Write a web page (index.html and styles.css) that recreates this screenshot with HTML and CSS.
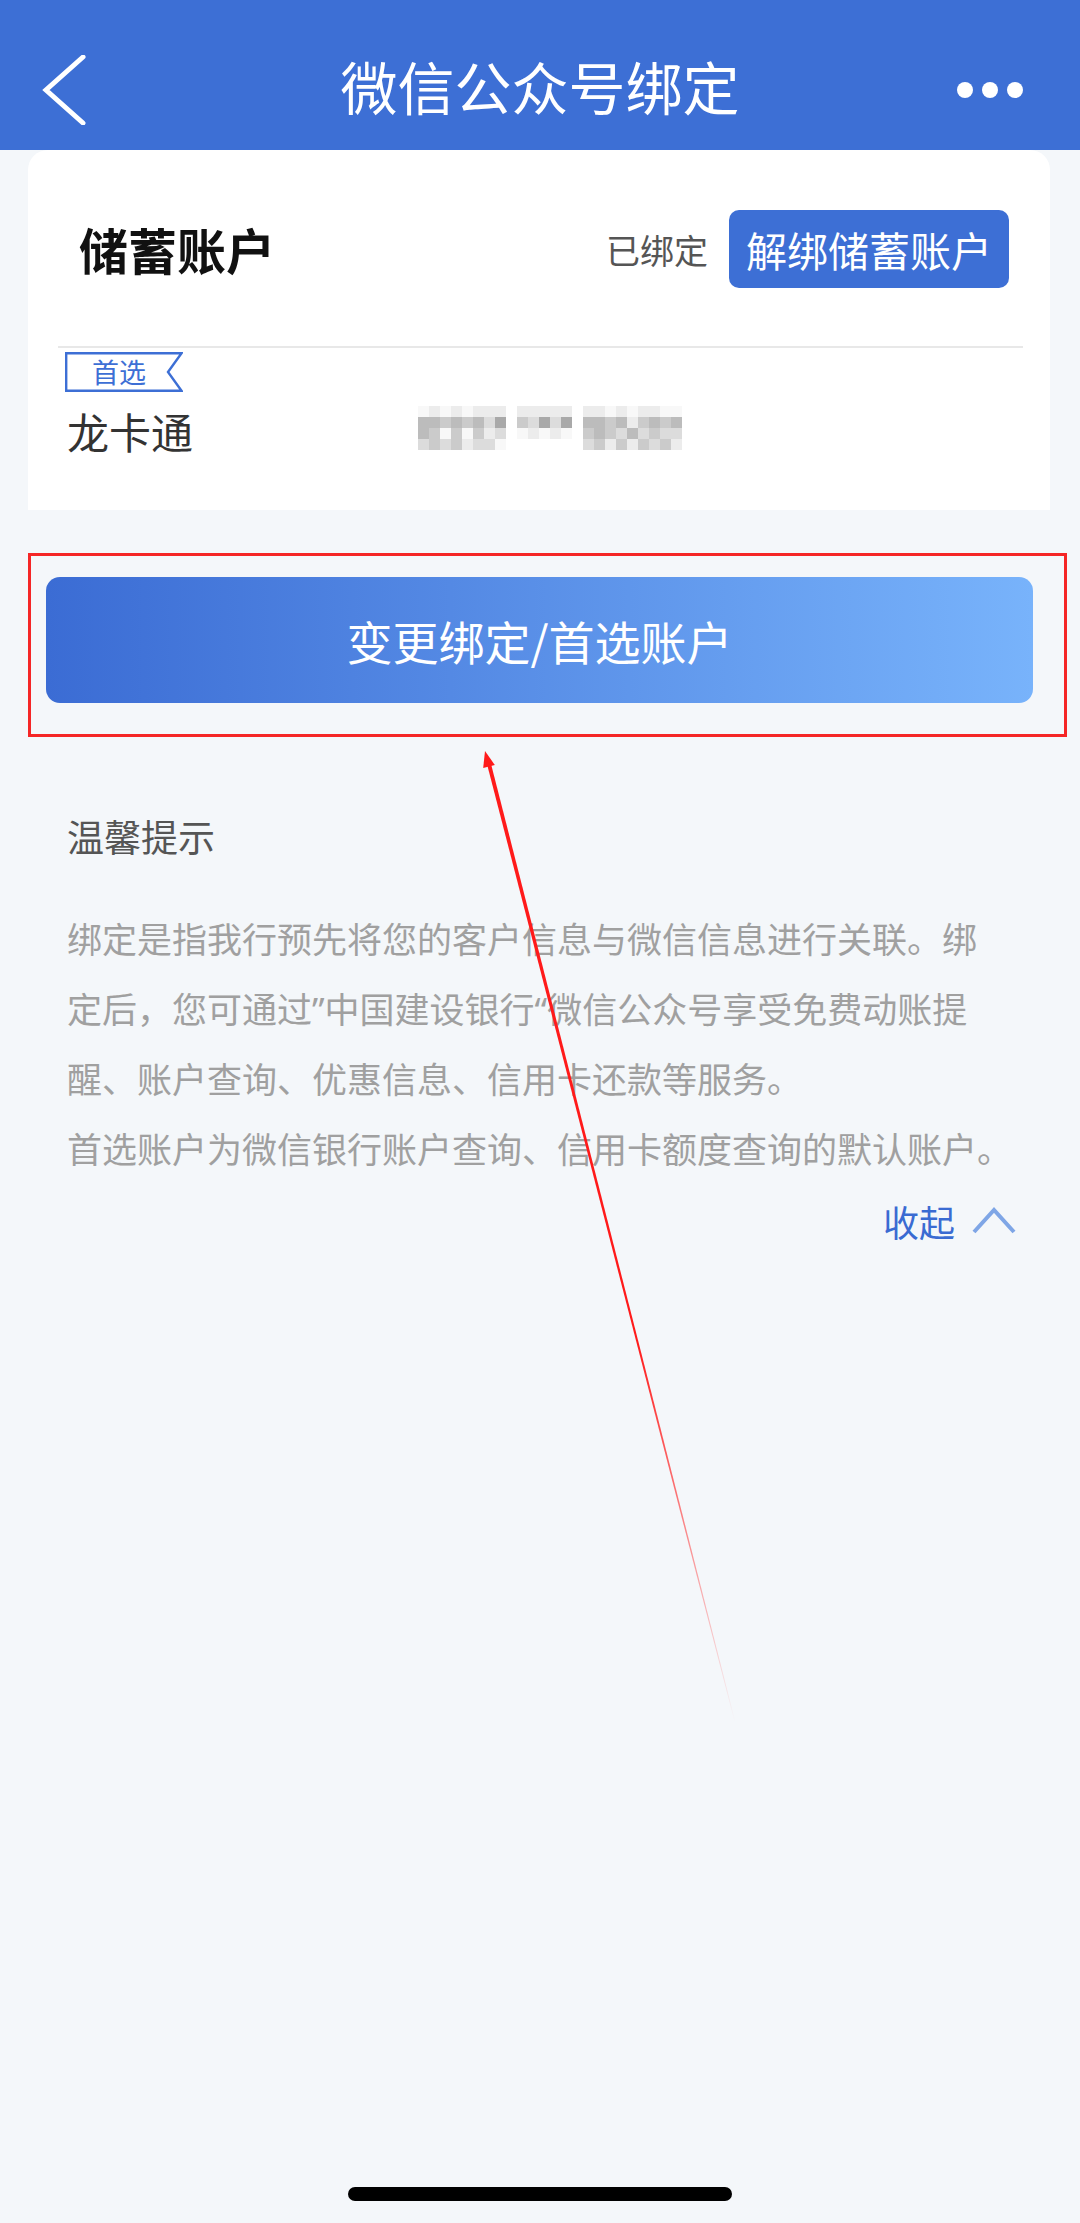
FILE: index.html
```html
<!DOCTYPE html>
<html lang="zh-CN">
  <head>
    <meta charset="UTF-8" />
    <meta name="viewport" content="width=device-width, initial-scale=1.0" />
    <title>微信公众号绑定</title>
    <link rel="stylesheet" href="styles.css">
  </head>
  <body>
    <header class="topbar">
      <div class="topbar-left">
        <svg class="back-icon" width="44" height="70" viewBox="0 0 44 70">
          <polyline points="41,2 4,35 41,68" fill="none" stroke="#fff" stroke-width="5" stroke-linecap="round" stroke-linejoin="miter" />
        </svg>
      </div>
      <h1 class="topbar-title">微信公众号绑定</h1>
      <div class="topbar-right">
        <span class="dot"></span><span class="dot"></span><span class="dot"></span>
      </div>
    </header>

    <section class="card">
      <div class="card-head">
        <h2 class="card-title">储蓄账户</h2>
        <span class="bound-state">已绑定</span>
        <button class="unbind-btn">解绑储蓄账户</button>
      </div>
      <div class="divider"></div>
      <div class="card-body">
        <div class="tag">
          <svg class="tag-shape" width="118" height="40" viewBox="0 0 118 40">
            <polygon points="1.2,1.2 116.5,1.2 103,20 116.5,38.8 1.2,38.8" fill="none" stroke="#3d6fd5" stroke-width="2.4" />
          </svg>
          <span class="tag-text">首选</span>
        </div>
        <div class="account-row">
          <span class="account-name">龙卡通</span>
          <div class="masked">
            <div class="pix pix-8">
              <i class="p0"></i><i class="p1"></i><i class="p0"></i><i class="p1"></i><i class="p0"></i><i class="p1"></i><i class="p1"></i><i class="p1"></i>
              <i class="p4"></i><i class="p4"></i><i class="p3"></i><i class="p4"></i><i class="p3"></i><i class="p4"></i><i class="p2"></i><i class="p5"></i>
              <i class="p4"></i><i class="p3"></i><i class="p0"></i><i class="p3"></i><i class="p0"></i><i class="p3"></i><i class="p1"></i><i class="p2"></i>
              <i class="p2"></i><i class="p3"></i><i class="p2"></i><i class="p3"></i><i class="p1"></i><i class="p2"></i><i class="p2"></i><i class="p0"></i>
            </div>
            <div class="pix pix-5">
              <i class="p1"></i><i class="p1"></i><i class="p1"></i><i class="p1"></i><i class="p1"></i>
              <i class="p3"></i><i class="p2"></i><i class="p5"></i><i class="p2"></i><i class="p5"></i>
              <i class="p0"></i><i class="p1"></i><i class="p0"></i><i class="p1"></i><i class="p0"></i>
            </div>
            <div class="pix pix-9">
              <i class="p1"></i><i class="p1"></i><i class="p0"></i><i class="p1"></i><i class="p0"></i><i class="p1"></i><i class="p1"></i><i class="p0"></i><i class="p0"></i>
              <i class="p4"></i><i class="p4"></i><i class="p3"></i><i class="p4"></i><i class="p1"></i><i class="p3"></i><i class="p4"></i><i class="p3"></i><i class="p4"></i>
              <i class="p3"></i><i class="p4"></i><i class="p3"></i><i class="p2"></i><i class="p4"></i><i class="p2"></i><i class="p3"></i><i class="p2"></i><i class="p2"></i>
              <i class="p2"></i><i class="p3"></i><i class="p1"></i><i class="p3"></i><i class="p1"></i><i class="p3"></i><i class="p2"></i><i class="p3"></i><i class="p1"></i>
            </div>
          </div>
        </div>
      </div>
    </section>

    <div class="highlight">
      <button class="change-btn">变更绑定/首选账户</button>
    </div>

    <section class="tips">
      <h3 class="tips-title">温馨提示</h3>
      <p class="tips-text">绑定是指我行预先将您的客户信息与微信信息进行关联。绑<br>定后，您可通过”中国建设银行“微信公众号享受免费动账提<br>醒、账户查询、优惠信息、信用卡还款等服务。</p>
      <p class="tips-text">首选账户为微信银行账户查询、信用卡额度查询的默认账户。</p>
      <div class="collapse">
        <span>收起</span>
        <svg class="collapse-icon" width="44" height="28" viewBox="0 0 44 28">
          <polyline points="2,25 22,3 42,25" fill="none" stroke="#7fa6e6" stroke-width="4" />
        </svg>
      </div>
    </section>

    <div class="home-bar"></div>

    <!-- annotation arrow drawn over the page -->
    <svg class="annotation" width="1080" height="2223" viewBox="0 0 1080 2223">
      <defs>
        <linearGradient id="fade" gradientUnits="userSpaceOnUse" x1="489" y1="764" x2="735" y2="1722">
          <stop offset="0" stop-color="#ff1a1a" stop-opacity="1" />
          <stop offset="0.6" stop-color="#ff1a1a" stop-opacity="1" />
          <stop offset="1" stop-color="#ff1a1a" stop-opacity="0" />
        </linearGradient>
      </defs>
      <polygon points="487.1,764.5 490.9,763.5 735.4,1721.9 734.6,1722.1" fill="url(#fade)" />
      <polygon points="485,751 494.8,765 483.2,768" fill="#ff1a1a" />
    </svg>
  </body>
</html>
```

FILE: styles.css
```css
* {
  box-sizing: border-box;
  margin: 0;
  padding: 0;
}

body {
  position: relative;
  width: 1080px;
  min-height: 2223px;
  display: flex;
  flex-direction: column;
  background-color: #f4f7fa;
  font-family: "Noto Sans CJK SC", "Noto Sans", sans-serif;
  color: #333;
}

/* top bar */
.topbar {
  height: 150px;
  padding-top: 20px;
  display: grid;
  grid-template-columns: 160px 1fr 160px;
  align-items: center;
  background-color: #3d6fd5;
  color: #fff;
}

.topbar-left {
  padding-left: 42px;
  padding-top: 10px;
  display: flex;
}

.topbar-title {
  text-align: center;
  font-size: 57px;
  font-weight: 400;
  line-height: 80px;
}

.topbar-right {
  display: flex;
  justify-content: flex-end;
  gap: 9px;
  padding-right: 57px;
  padding-top: 10px;
}

.dot {
  width: 16px;
  height: 16px;
  border-radius: 50%;
  background-color: #fff;
}

/* account card */
.card {
  margin: 0 30px 0 28px;
  padding-bottom: 50px;
  background-color: #fff;
  border-radius: 20px 20px 0 0;
}

.card-head {
  display: flex;
  align-items: center;
  padding: 60px 41px 0 51px;
}

.card-title {
  font-size: 49px;
  font-weight: 700;
  line-height: 78px;
  color: #111;
}

.bound-state {
  margin-left: auto;
  margin-right: 21px;
  font-size: 34px;
  color: #555;
}

.unbind-btn {
  height: 78px;
  padding: 0 17px;
  border: none;
  border-radius: 10px;
  background-color: #3d6fd5;
  color: #fff;
  font-family: inherit;
  font-size: 41px;
  line-height: 78px;
}

.divider {
  height: 2px;
  margin: 58px 27px 0 30px;
  background-color: #e8e8e8;
}

.card-body {
  padding: 4px 0 0 37px;
}

.tag {
  position: relative;
  width: 118px;
  height: 40px;
}

.tag-shape {
  position: absolute;
  top: 0;
  left: 0;
}

.tag-text {
  position: relative;
  display: block;
  padding-left: 27px;
  font-size: 27px;
  line-height: 40px;
  color: #3d6fd5;
}

.account-row {
  display: flex;
  align-items: center;
  margin-top: 10px;
  padding-left: 2px;
}

.account-name {
  width: 351px;
  font-size: 42px;
  line-height: 58px;
  color: #333;
}

.masked {
  display: flex;
  gap: 11px;
  margin-top: -6px;
}

.pix {
  display: grid;
  grid-auto-rows: 11px;
}

.pix-8 { grid-template-columns: repeat(8, 11px); }
.pix-5 { grid-template-columns: repeat(5, 11px); align-self: flex-start; }
.pix-9 { grid-template-columns: repeat(9, 11px); }

.p0 { background-color: #f8f8f8; }
.p1 { background-color: #ececec; }
.p2 { background-color: #dcdcdc; }
.p3 { background-color: #cbcbcb; }
.p4 { background-color: #bcbcbc; }
.p5 { background-color: #a9a9a9; }

/* main action */
.highlight {
  margin: 43px 13px 0 28px;
  padding: 21px 31px 31px 15px;
  border: 3px solid #f52626;
}

.change-btn {
  display: block;
  width: 100%;
  height: 126px;
  border: none;
  border-radius: 14px;
  background: linear-gradient(to right, #3b6cd4, #78b3fb);
  color: #fff;
  font-family: inherit;
  font-size: 46px;
}

/* tips */
.tips {
  margin-top: 73px;
  padding: 0 67px;
}

.tips-title {
  font-size: 37px;
  font-weight: 400;
  line-height: 52px;
  color: #555;
  margin-bottom: 43px;
}

.tips-text {
  font-family: "Noto Sans", "Noto Sans CJK SC", sans-serif;
  font-size: 35px;
  line-height: 70px;
  color: #a0a0a0;
  white-space: nowrap;
}

.collapse {
  display: flex;
  align-items: center;
  justify-content: flex-end;
  margin-top: 11px;
  margin-right: -3px;
  font-size: 36px;
  line-height: 50px;
  color: #3a6bd2;
}

.collapse-icon {
  margin-left: 17px;
}

.home-bar {
  align-self: center;
  width: 384px;
  height: 14px;
  margin-top: auto;
  margin-bottom: 22px;
  border-radius: 7px;
  background-color: #000;
}

.annotation {
  position: absolute;
  top: 0;
  left: 0;
  pointer-events: none;
}
```
